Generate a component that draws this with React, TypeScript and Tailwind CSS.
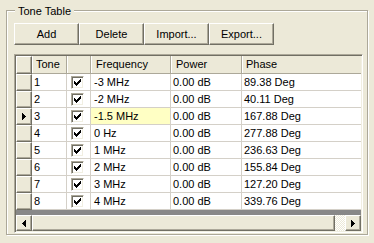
import React from 'react';

// --- data ---
const rows = [
  { tone: '1', freq: '-3 MHz', power: '0.00 dB', phase: '89.38 Deg' },
  { tone: '2', freq: '-2 MHz', power: '0.00 dB', phase: '40.11 Deg' },
  { tone: '3', freq: '-1.5 MHz', power: '0.00 dB', phase: '167.88 Deg' },
  { tone: '4', freq: '0 Hz', power: '0.00 dB', phase: '277.88 Deg' },
  { tone: '5', freq: '1 MHz', power: '0.00 dB', phase: '236.63 Deg' },
  { tone: '6', freq: '2 MHz', power: '0.00 dB', phase: '155.84 Deg' },
  { tone: '7', freq: '3 MHz', power: '0.00 dB', phase: '127.20 Deg' },
  { tone: '8', freq: '4 MHz', power: '0.00 dB', phase: '339.76 Deg' },
];

const raised = 'border border-t-white border-l-white border-r-[#716F64] border-b-[#716F64] shadow-[inset_-1px_-1px_0_#ACA899] bg-[#ECE9D8]';

const Arrow: React.FC<{ dir: 'left' | 'right' }> = ({ dir }) => (
  <svg width="4" height="7" viewBox="0 0 4 7" shapeRendering="crispEdges">
    {dir === 'right' ? (
      <>
        <rect x="0" y="0" width="1" height="7" fill="#000" />
        <rect x="1" y="1" width="1" height="5" fill="#000" />
        <rect x="2" y="2" width="1" height="3" fill="#000" />
        <rect x="3" y="3" width="1" height="1" fill="#000" />
      </>
    ) : (
      <>
        <rect x="3" y="0" width="1" height="7" fill="#000" />
        <rect x="2" y="1" width="1" height="5" fill="#000" />
        <rect x="1" y="2" width="1" height="3" fill="#000" />
        <rect x="0" y="3" width="1" height="1" fill="#000" />
      </>
    )}
  </svg>
);

const checkPixels = [
  [6], [5, 6], [0, 4, 5, 6], [0, 1, 3, 4, 5], [0, 1, 2, 3, 4], [1, 2, 3], [2],
];

const CheckBox: React.FC = () => (
  <div className="w-[13px] h-[13px] bg-white border border-t-[#ACA899] border-l-[#ACA899] border-r-white border-b-white shadow-[inset_1px_1px_0_#716F64,inset_-1px_-1px_0_#F1EFE2] flex items-center justify-center">
    <svg width="7" height="7" viewBox="0 0 7 7" shapeRendering="crispEdges">
      {checkPixels.map((xs, y) => xs.map(x => <rect key={`${x}-${y}`} x={x} y={y} width="1" height="1" fill="#000" />))}
    </svg>
  </div>
);

const Button: React.FC<{ label: string }> = ({ label }) => (
  <div className={`w-[65px] h-[22px] flex items-center justify-center ${raised}`}>{label}</div>
);

export default function App() {
  return (
    <div className="w-[374px] h-[243px] bg-[#ECE9D8] pt-[10px] pl-[6px] font-['Liberation_Sans',Arial,sans-serif] text-[11px] text-black leading-none">
      {/* group box */}
      <div className="relative w-[362px] h-[225px] border border-[#ACA899] shadow-[inset_1px_1px_0_#fff,1px_1px_0_#fff] pt-[12px] pl-[7px]">
        <span className="absolute left-[8px] top-[-7px] bg-[#ECE9D8] px-[3px] leading-[14px]">Tone Table</span>

        <div className="flex">
          <Button label="Add" />
          <Button label="Delete" />
          <Button label="Import..." />
          <Button label="Export..." />
        </div>

        {/* grid */}
        <div className="mt-[9px] w-[349px] h-[179px] border border-t-[#ACA899] border-l-[#ACA899] border-r-white border-b-white shadow-[inset_1px_1px_0_#716F64,inset_-1px_-1px_0_#F1EFE2] p-[1px]">
          <div className="flex flex-col w-[345px] h-[175px] bg-[#888888]">
            {/* header */}
            <div className="flex h-[18px] shrink-0">
              <div className={`w-[16px] ${raised}`} />
              <div className="w-[35px] bg-[#ECE9D8] border-r border-b border-[#ACA899] shadow-[inset_1px_0_0_#fff] flex items-center pl-[4px]">Tone</div>
              <div className="w-[24px] bg-[#ECE9D8] border-r border-b border-[#ACA899] shadow-[inset_1px_0_0_#fff]" />
              <div className="w-[80px] bg-[#ECE9D8] border-r border-b border-[#ACA899] shadow-[inset_1px_0_0_#fff] flex items-center pl-[5px]">Frequency</div>
              <div className="w-[71px] bg-[#ECE9D8] border-r border-b border-[#ACA899] shadow-[inset_1px_0_0_#fff] flex items-center pl-[5px]">Power</div>
              <div className="w-[119px] bg-[#ECE9D8] border-b border-[#ACA899] shadow-[inset_1px_0_0_#fff] flex items-center pl-[4px]">Phase</div>
            </div>

            {rows.map((r, i) => (
              <div key={r.tone} className="flex h-[17px] shrink-0">
                <div className={`w-[16px] flex items-center justify-center ${raised}`}>
                  {i === 2 && <Arrow dir="right" />}
                </div>
                <div className="w-[35px] bg-white border-r border-b border-[#D4D0C8] flex items-center pl-[2px]">{r.tone}</div>
                <div className="w-[24px] bg-white border-r border-b border-[#D4D0C8] flex items-center pl-[4px]">
                  <CheckBox />
                </div>
                <div className={`w-[80px] border-r border-b border-[#D4D0C8] flex items-center pl-[3px] ${i === 2 ? 'bg-[#FFFFC4]' : 'bg-white'}`}>{r.freq}</div>
                <div className="w-[71px] bg-white border-r border-b border-[#D4D0C8] flex items-center pl-[2px]">{r.power}</div>
                <div className="w-[119px] bg-white border-b border-[#D4D0C8] flex items-center pl-[2px]">{r.phase}</div>
              </div>
            ))}

            <div className="flex-1" />

            {/* horizontal scrollbar */}
            <div className="flex h-[16px] shrink-0">
              <div className={`w-[16px] flex items-center justify-center ${raised}`}>
                <Arrow dir="left" />
              </div>
              <div className={`flex-1 ${raised}`} />
              <div className="w-[10px] bg-[image:repeating-conic-gradient(#ECE9D8_0_25%,#ffffff_0_50%)] bg-[length:2px_2px]" />
              <div className={`w-[16px] flex items-center justify-center ${raised}`}>
                <Arrow dir="right" />
              </div>
            </div>
          </div>
        </div>
      </div>
    </div>
  );
}
